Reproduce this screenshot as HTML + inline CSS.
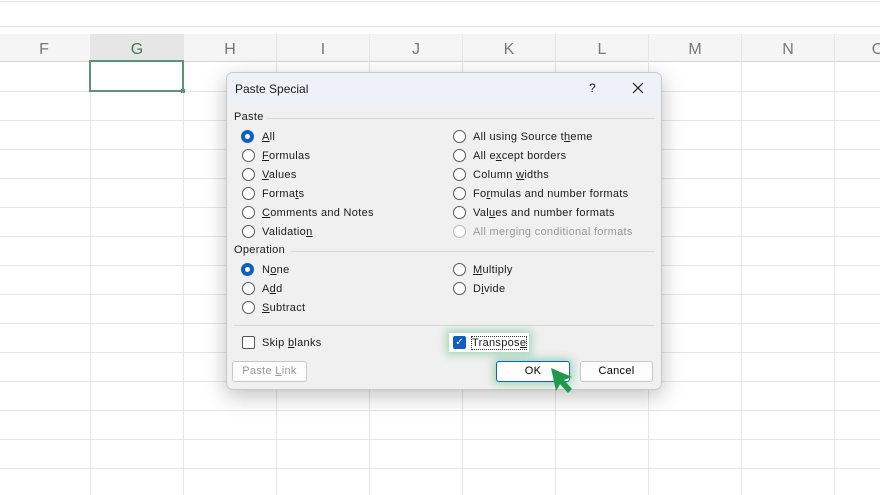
<!DOCTYPE html><html><head><style>
body{margin:0;width:880px;height:495px;overflow:hidden;background:#fff;font-family:"Liberation Sans",sans-serif;position:relative}
.a{position:absolute}
.t{font-size:11px;color:#1a1a1a;white-space:nowrap;letter-spacing:.3px}
.r{position:absolute;width:11px;height:11px;border:1px solid #555;border-radius:50%;background:#fff}
.r.on{border:none;background:#0f5fbf;width:13px;height:13px}
.r.on:after{content:"";position:absolute;left:4px;top:4px;width:5px;height:5px;border-radius:50%;background:#fff}
.r.dis{border-color:#bbb}
u{text-decoration:underline}
.sec{font-size:11px;color:#1a1a1a;letter-spacing:.3px}
.hl{position:absolute;height:1px;background:#d8d8d8}
.btn{position:absolute;height:19px;border:1px solid #c8c8c8;border-radius:3px;background:#fdfdfd;font-size:11px;text-align:center;line-height:19px;letter-spacing:.3px}
</style></head><body>
<div class="a" style="left:0;top:1px;width:880px;height:1px;background:#e0e0e0"></div>
<div class="a" style="left:0;top:26px;width:880px;height:1px;background:#e0e0e0"></div>
<div class="a" style="left:0;top:34px;width:880px;height:27px;background:#f5f5f5;border-bottom:1px solid #d4d4d4"></div>
<div class="a" style="left:90px;top:34px;width:93px;height:27px;background:#e6e6e6"></div>
<svg class="a" style="left:0;top:0" width="880" height="495">
<g stroke="#e6e6e6" stroke-width="1">
<line x1="90.5" y1="34" x2="90.5" y2="495"/><line x1="183.5" y1="34" x2="183.5" y2="495"/><line x1="276.5" y1="34" x2="276.5" y2="495"/><line x1="369.5" y1="34" x2="369.5" y2="495"/><line x1="462.5" y1="34" x2="462.5" y2="495"/><line x1="555.5" y1="34" x2="555.5" y2="495"/><line x1="648.5" y1="34" x2="648.5" y2="495"/><line x1="741.5" y1="34" x2="741.5" y2="495"/><line x1="834.5" y1="34" x2="834.5" y2="495"/>
<line x1="0" y1="91.5" x2="880" y2="91.5"/><line x1="0" y1="120.5" x2="880" y2="120.5"/><line x1="0" y1="149.5" x2="880" y2="149.5"/><line x1="0" y1="178.5" x2="880" y2="178.5"/><line x1="0" y1="207.5" x2="880" y2="207.5"/><line x1="0" y1="236.5" x2="880" y2="236.5"/><line x1="0" y1="265.5" x2="880" y2="265.5"/><line x1="0" y1="294.5" x2="880" y2="294.5"/><line x1="0" y1="323.5" x2="880" y2="323.5"/><line x1="0" y1="352.5" x2="880" y2="352.5"/><line x1="0" y1="381.5" x2="880" y2="381.5"/><line x1="0" y1="410.5" x2="880" y2="410.5"/><line x1="0" y1="439.5" x2="880" y2="439.5"/><line x1="0" y1="468.5" x2="880" y2="468.5"/>
</g>
<g font-family="Liberation Sans" font-size="16" fill="#777" text-anchor="middle">
<text x="44" y="54">F</text><text x="137" y="54" fill="#3f7a5a">G</text><text x="230" y="54">H</text><text x="323" y="54">I</text><text x="416" y="54">J</text><text x="509" y="54">K</text><text x="602" y="54">L</text><text x="695" y="54">M</text><text x="788" y="54">N</text><text x="878" y="54">O</text></g>
<rect x="90" y="61" width="93" height="30" fill="none" stroke="#5b9377" stroke-width="2"/>
<rect x="181" y="89" width="4" height="4" fill="#5b9377"/>
</svg>
<div class="a" style="left:226px;top:72px;width:434px;height:316px;background:#f0f0f0;border:1px solid #c8c8c8;border-radius:7px;box-shadow:0 6px 22px rgba(0,0,0,.25);overflow:hidden">
<div class="a" style="left:0;top:0;width:434px;height:31px;background:#eef2f8"></div>
<div class="a t" style="left:8px;top:9px;font-size:12px;letter-spacing:0">Paste Special</div>
<div class="a t" style="left:362px;top:8px;font-size:12px">?</div>
<svg class="a" style="left:405px;top:9px" width="12" height="12"><path d="M1 1L11 11M11 1L1 11" stroke="#222" stroke-width="1.2"/></svg>
<div class="a sec" style="left:7px;top:38px">Paste</div><div class="hl" style="left:40px;top:45px;width:388px"></div>
<div class="a sec" style="left:7px;top:171px">Operation</div><div class="hl" style="left:64px;top:178px;width:364px"></div>
<div class="hl" style="left:7px;top:252px;width:421px"></div>
</div>
<div class="r on" style="left:241px;top:130px"></div><div class="a t" style="left:262px;top:131px"><u>A</u>ll</div>
<div class="r" style="left:242px;top:149px"></div><div class="a t" style="left:262px;top:150px"><u>F</u>ormulas</div>
<div class="r" style="left:242px;top:168px"></div><div class="a t" style="left:262px;top:169px"><u>V</u>alues</div>
<div class="r" style="left:242px;top:187px"></div><div class="a t" style="left:262px;top:188px">Forma<u>t</u>s</div>
<div class="r" style="left:242px;top:206px"></div><div class="a t" style="left:262px;top:207px"><u>C</u>omments and Notes</div>
<div class="r" style="left:242px;top:225px"></div><div class="a t" style="left:262px;top:226px">Validatio<u>n</u></div>
<div class="r" style="left:453px;top:130px"></div><div class="a t" style="left:473px;top:131px">All using Source t<u>h</u>eme</div>
<div class="r" style="left:453px;top:149px"></div><div class="a t" style="left:473px;top:150px">All e<u>x</u>cept borders</div>
<div class="r" style="left:453px;top:168px"></div><div class="a t" style="left:473px;top:169px">Column <u>w</u>idths</div>
<div class="r" style="left:453px;top:187px"></div><div class="a t" style="left:473px;top:188px">Fo<u>r</u>mulas and number formats</div>
<div class="r" style="left:453px;top:206px"></div><div class="a t" style="left:473px;top:207px">Val<u>u</u>es and number formats</div>
<div class="r dis" style="left:453px;top:225px"></div><div class="a t" style="left:473px;top:226px;color:#999">All merging conditional formats</div>
<div class="r on" style="left:241px;top:263px"></div><div class="a t" style="left:262px;top:264px">N<u>o</u>ne</div>
<div class="r" style="left:242px;top:282px"></div><div class="a t" style="left:262px;top:283px">A<u>d</u>d</div>
<div class="r" style="left:242px;top:301px"></div><div class="a t" style="left:262px;top:302px"><u>S</u>ubtract</div>
<div class="r" style="left:453px;top:263px"></div><div class="a t" style="left:473px;top:264px"><u>M</u>ultiply</div>
<div class="r" style="left:453px;top:282px"></div><div class="a t" style="left:473px;top:283px">D<u>i</u>vide</div>
<div class="a" style="left:242px;top:336px;width:11px;height:11px;border:1px solid #555;border-radius:2px;background:#fff"></div>
<div class="a t" style="left:262px;top:337px">Skip <u>b</u>lanks</div>
<div class="a" style="left:449px;top:333px;width:80px;height:19px;background:#fff;box-shadow:0 0 8px 3px rgba(40,170,90,.35)"></div>
<div class="a" style="left:453px;top:336px;width:13px;height:13px;border-radius:2px;background:#0f5fbf;color:#fff;font-size:10px;line-height:13px;text-align:center">✓</div>
<div class="a t" style="left:472px;top:337px;outline:1px dotted #333">Transpos<u>e</u></div>
<div class="btn" style="left:232px;top:361px;width:73px;color:#999">Paste <u>L</u>ink</div>
<div class="btn" style="left:496px;top:361px;width:72px;border:1px solid #0f5fbf;box-shadow:0 0 8px 3px rgba(40,170,90,.35)">OK</div>
<div class="btn" style="left:580px;top:361px;width:71px">Cancel</div>
<svg class="a" style="left:548px;top:367px" width="32" height="32"><path d="M3 1 L24 10 L16 13 L24 22 L20 26 L12 17 L8 24 Z" fill="#1f9a4a"/></svg>
</body></html>
